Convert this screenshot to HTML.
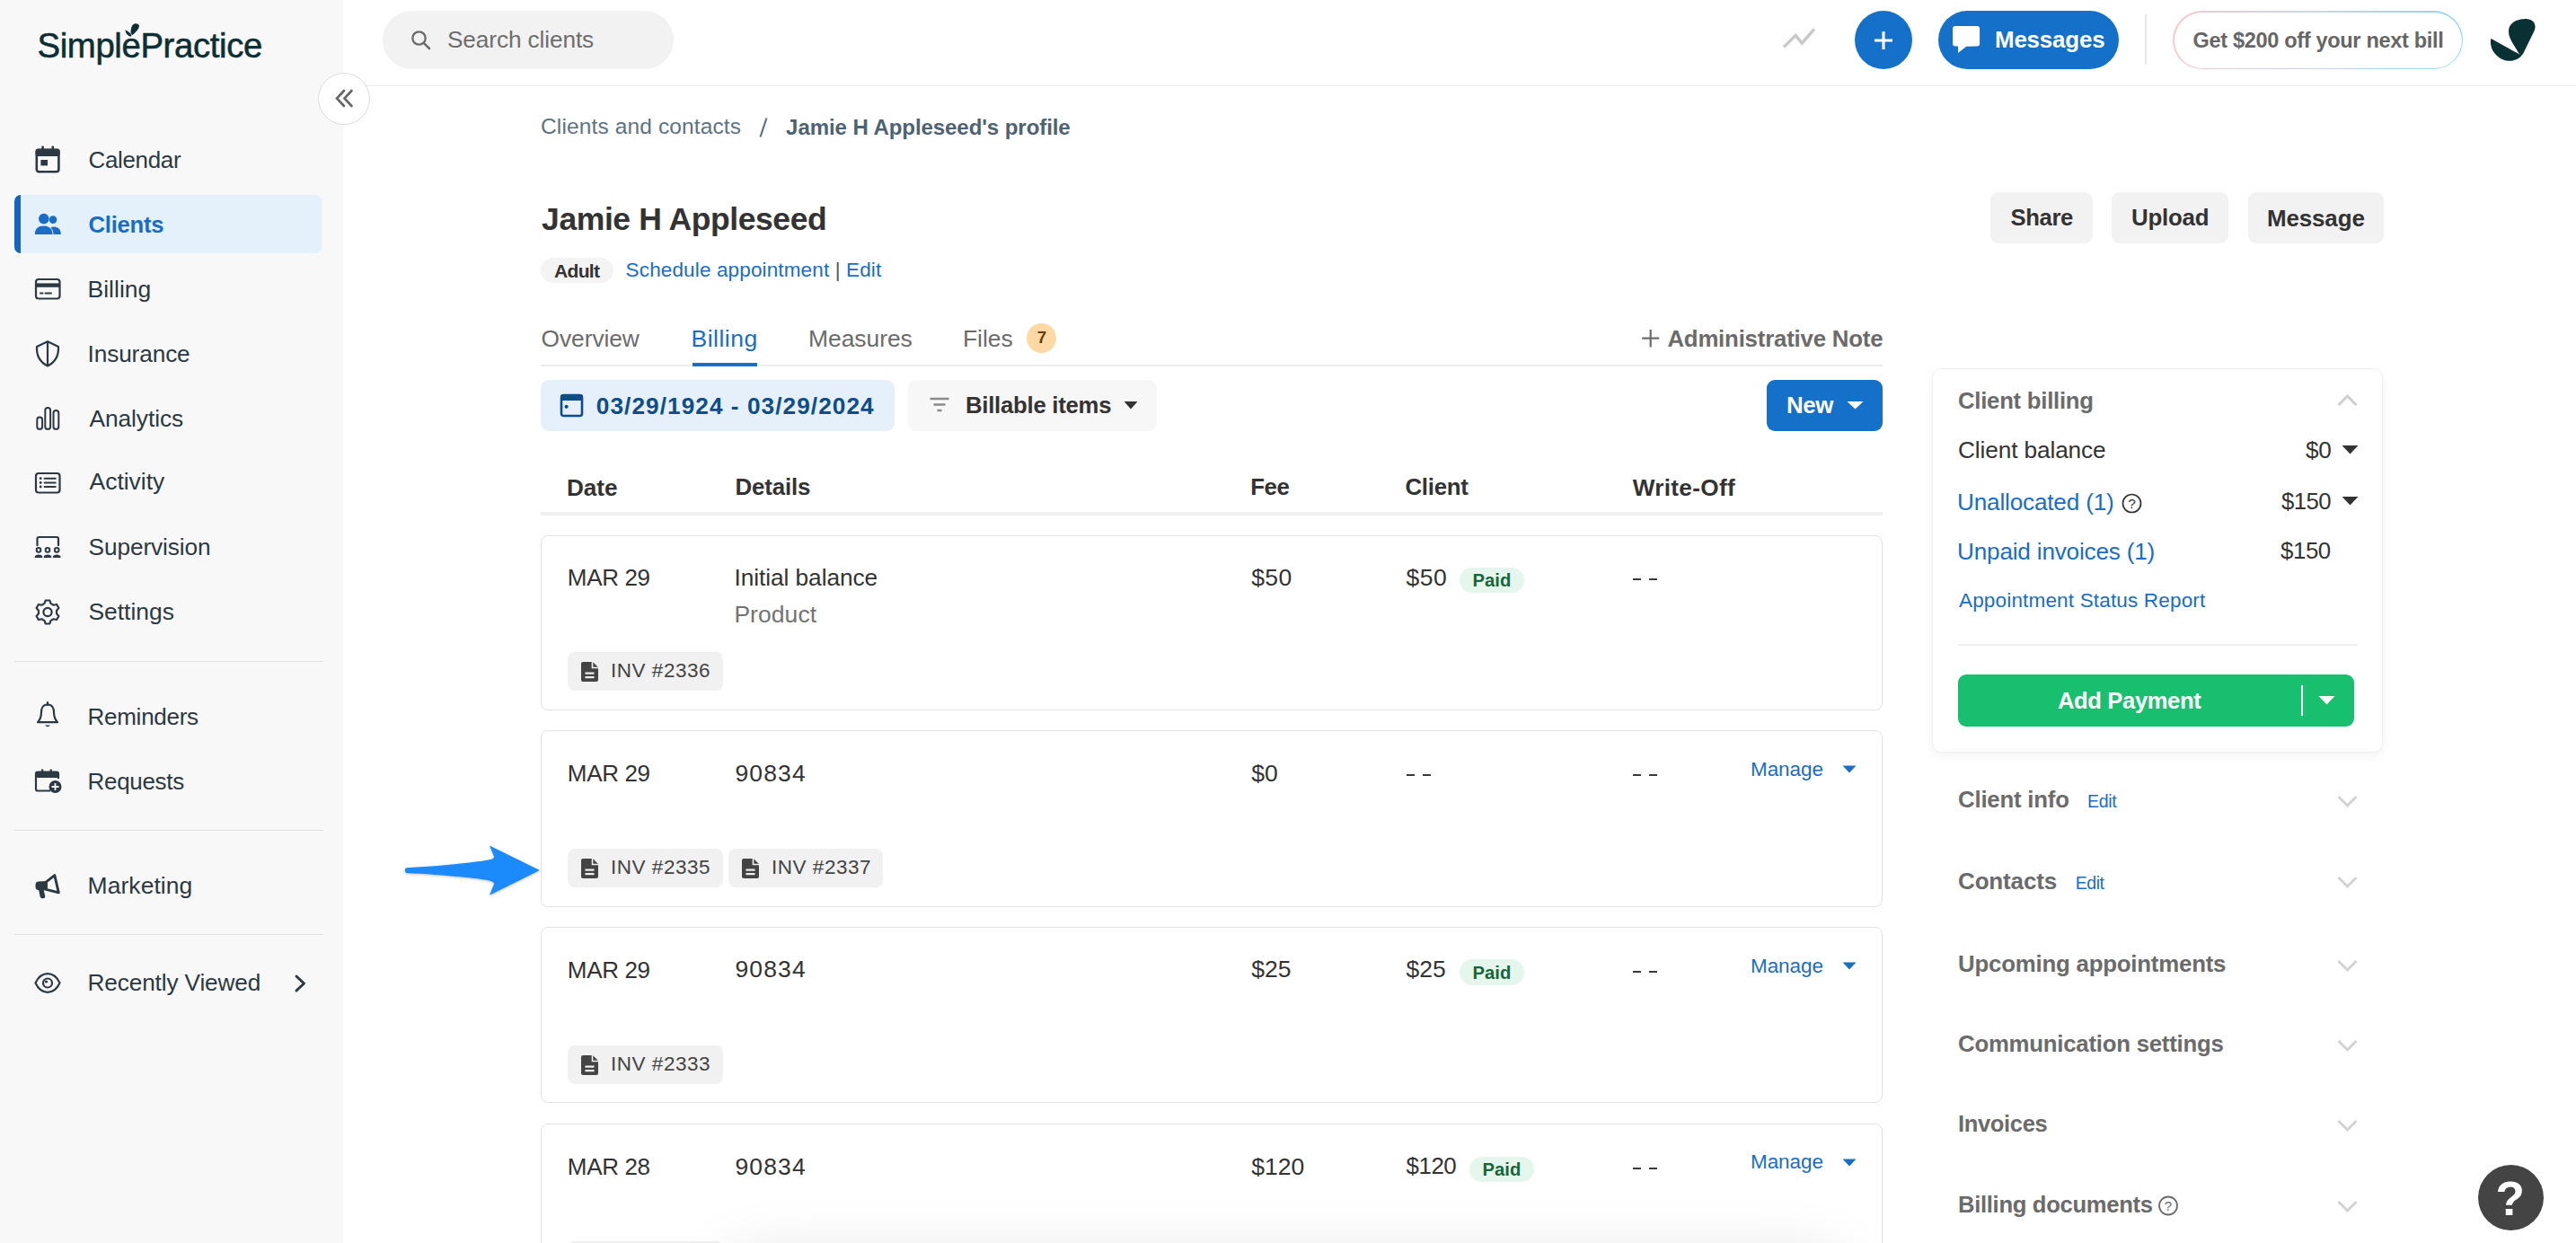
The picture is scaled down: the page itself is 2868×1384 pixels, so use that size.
<!DOCTYPE html>
<html><head><meta charset="utf-8"><title>SimplePractice</title>
<style>
html,body{margin:0;padding:0;}
body{width:2868px;height:1384px;position:relative;overflow:hidden;background:#fff;font-family:"Liberation Sans", sans-serif;}
.t{position:absolute;white-space:nowrap;}
svg{overflow:visible;}
</style></head><body>
<div style="position:absolute;left:0px;top:0px;width:383px;height:1384px;background:#f8f8f8;"></div>
<div class="t" style="left:41.52px;top:32.13px;font-size:38.36276253512907px;line-height:38.36276253512907px;color:#0d2f33;font-weight:400;letter-spacing:-0.391px;-webkit-text-stroke:0.55px #0d2f33;">SimplePractice</div>
<svg style="position:absolute;left:138px;top:25px;" width="18" height="17" viewBox="0 0 18 17"><path d="M8 15.5 C 7 11, 7.5 6, 9.5 3 C 11.5 0.5, 16 0.8, 16.8 3.5 C 17.5 6.5, 13 11, 8 15.5 Z" fill="#0d2f33" stroke="#f8f8f8" stroke-width="1.4" paint-order="stroke"/><path d="M1.4 8.3 C 4 9.5, 6.5 11, 8.5 13.8 L 8 15.6 C 4.5 15.5, 2 12.5, 1.4 8.3 Z" fill="#0d2f33" stroke="#f8f8f8" stroke-width="1.4" paint-order="stroke"/></svg>
<div style="position:absolute;left:16px;top:217px;width:342px;height:65px;background:#e5f1fa;border-radius:7px;overflow:hidden;"></div>
<div style="position:absolute;left:16px;top:217px;width:7px;height:65px;background:#1565c0;border-radius:8px 0 0 8px;"></div>
<div class="t" style="left:98.52px;top:165.83px;font-size:25.95181215039865px;line-height:25.95181215039865px;color:#2c3942;font-weight:400;letter-spacing:-0.315px;">Calendar</div>
<div class="t" style="left:98.52px;top:238.04px;font-size:25.7043104629539px;line-height:25.7043104629539px;color:#1a6dc6;font-weight:700;letter-spacing:-0.270px;">Clients</div>
<div class="t" style="left:97.50px;top:308.57px;font-size:26.5px;line-height:26.5px;color:#2c3942;font-weight:400;letter-spacing:0.023px;">Billing</div>
<div class="t" style="left:97.52px;top:380.78px;font-size:26.25055213366361px;line-height:26.25055213366361px;color:#2c3942;font-weight:400;letter-spacing:-0.134px;">Insurance</div>
<div class="t" style="left:99.50px;top:453.20px;font-size:26.338576103537644px;line-height:26.338576103537644px;color:#2c3942;font-weight:400;letter-spacing:-0.081px;">Analytics</div>
<div class="t" style="left:99.50px;top:523.38px;font-size:26.488218147219097px;line-height:26.488218147219097px;color:#2c3942;font-weight:400;letter-spacing:-0.005px;">Activity</div>
<div class="t" style="left:98.51px;top:596.25px;font-size:26.28418006763875px;line-height:26.28418006763875px;color:#2c3942;font-weight:400;letter-spacing:-0.111px;">Supervision</div>
<div class="t" style="left:98.50px;top:667.60px;font-size:26.45766353208639px;line-height:26.45766353208639px;color:#2c3942;font-weight:400;letter-spacing:-0.022px;">Settings</div>
<div class="t" style="left:97.53px;top:784.76px;font-size:26.03932485114141px;line-height:26.03932485114141px;color:#2c3942;font-weight:400;letter-spacing:-0.274px;">Reminders</div>
<div class="t" style="left:97.54px;top:857.00px;font-size:25.992457827035206px;line-height:25.992457827035206px;color:#2c3942;font-weight:400;letter-spacing:-0.300px;">Requests</div>
<div class="t" style="left:97.50px;top:972.97px;font-size:26.5px;line-height:26.5px;color:#2c3942;font-weight:400;letter-spacing:0.061px;">Marketing</div>
<div class="t" style="left:97.52px;top:1081.40px;font-size:26.229650591108104px;line-height:26.229650591108104px;color:#2c3942;font-weight:400;letter-spacing:-0.141px;">Recently Viewed</div>
<div style="position:absolute;left:16px;top:736px;width:344px;height:1px;background:#dedede;"></div>
<div style="position:absolute;left:16px;top:924px;width:344px;height:1px;background:#dedede;"></div>
<div style="position:absolute;left:16px;top:1040px;width:344px;height:1px;background:#dedede;"></div>
<svg style="position:absolute;left:326px;top:1084px;" width="18" height="22" viewBox="0 0 18 22"><path d="M4 3 L12.5 11 L4 19" fill="none" stroke="#2c3942" stroke-width="3" stroke-linecap="round" stroke-linejoin="round"/></svg>
<svg style="position:absolute;left:38px;top:161px;" width="30" height="32" viewBox="0 0 30 32"><rect x="2.8" y="6" width="24.6" height="24.3" rx="2.8" fill="none" stroke="#2c3942" stroke-width="2.6"/><rect x="1.5" y="4.5" width="27.2" height="8.5" rx="3" fill="#2c3942"/><rect x="8.3" y="1.5" width="2.6" height="5" rx="1" fill="#2c3942"/><rect x="19.5" y="1.5" width="2.6" height="5" rx="1" fill="#2c3942"/><rect x="7.4" y="17" width="7.6" height="6.4" fill="#2c3942"/></svg>
<svg style="position:absolute;left:37px;top:235px;" width="32" height="28" viewBox="0 0 32 28"><circle cx="11.8" cy="8.6" r="5.8" fill="#1a6dc6"/><circle cx="22" cy="9.6" r="4.3" fill="#1a6dc6"/><path d="M1.8 26 C 1.8 19, 6 16.5, 11.5 16.5 C 17 16.5, 21.5 19, 21.5 26 Z" fill="#1a6dc6"/><path d="M22.5 26 L30.8 26 C 30.8 20.5, 28 17.5, 23 17.5 C 21 17.5, 20 18, 19.5 18.5 C 21.5 20.5, 22.5 23, 22.5 26 Z" fill="#1a6dc6"/></svg>
<svg style="position:absolute;left:37px;top:308px;" width="32" height="27" viewBox="0 0 32 27"><rect x="3" y="3" width="26.5" height="21.5" rx="3" fill="none" stroke="#2c3942" stroke-width="2.2"/><rect x="3" y="7.4" width="26.5" height="4.4" fill="#2c3942"/><line x1="8" y1="18.5" x2="10.5" y2="18.5" stroke="#2c3942" stroke-width="2" stroke-linecap="round"/><line x1="13.5" y1="18.5" x2="20" y2="18.5" stroke="#2c3942" stroke-width="2" stroke-linecap="round"/></svg>
<svg style="position:absolute;left:37px;top:377px;" width="32" height="33" viewBox="0 0 32 33"><path d="M16 3.2 L4 9 C 3.5 19, 8 26.5, 16 30.5 C 24 26.5, 28.5 19, 28 9 Z" fill="none" stroke="#2c3942" stroke-width="2.2" stroke-linejoin="round"/><line x1="16" y1="3.5" x2="16" y2="30" stroke="#2c3942" stroke-width="2.2"/></svg>
<svg style="position:absolute;left:37px;top:450px;" width="32" height="30" viewBox="0 0 32 30"><rect x="4.3" y="14.6" width="5.8" height="13.2" rx="2.9" fill="none" stroke="#2c3942" stroke-width="2"/><rect x="13.3" y="4" width="5.8" height="23.8" rx="2.9" fill="none" stroke="#2c3942" stroke-width="2"/><rect x="22.5" y="7" width="5.8" height="20.8" rx="2.9" fill="none" stroke="#2c3942" stroke-width="2"/></svg>
<svg style="position:absolute;left:37px;top:524px;" width="32" height="27" viewBox="0 0 32 27"><rect x="3" y="3" width="26.5" height="21.5" rx="3" fill="none" stroke="#2c3942" stroke-width="2.2"/><circle cx="8.2" cy="8.7" r="1.4" fill="#2c3942"/><circle cx="8.2" cy="13.5" r="1.4" fill="#2c3942"/><circle cx="8.2" cy="18" r="1.4" fill="#2c3942"/><line x1="12.5" y1="8.7" x2="24.8" y2="8.7" stroke="#2c3942" stroke-width="1.9" stroke-linecap="round"/><line x1="12.5" y1="13.5" x2="24.8" y2="13.5" stroke="#2c3942" stroke-width="1.9" stroke-linecap="round"/><line x1="12.5" y1="18" x2="24.8" y2="18" stroke="#2c3942" stroke-width="1.9" stroke-linecap="round"/></svg>
<svg style="position:absolute;left:37px;top:595px;" width="32" height="28" viewBox="0 0 32 28"><path d="M4.5 12.2 L4.5 5 Q4.5 3 6.5 3 L26 3 Q28 3 28 5 L28 12.2" fill="none" stroke="#2c3942" stroke-width="2.2" stroke-linecap="round"/><circle cx="6" cy="17.4" r="2.3" fill="none" stroke="#2c3942" stroke-width="2"/><path d="M1.7000000000000002 26 L1.7000000000000002 25.2 C 1.7000000000000002 21.6, 10.3 21.6, 10.3 25.2 L10.3 26 Z" fill="#2c3942"/><circle cx="16" cy="17.4" r="2.3" fill="none" stroke="#2c3942" stroke-width="2"/><path d="M11.7 26 L11.7 25.2 C 11.7 21.6, 20.3 21.6, 20.3 25.2 L20.3 26 Z" fill="#2c3942"/><circle cx="26.2" cy="17.4" r="2.3" fill="none" stroke="#2c3942" stroke-width="2"/><path d="M21.9 26 L21.9 25.2 C 21.9 21.6, 30.5 21.6, 30.5 25.2 L30.5 26 Z" fill="#2c3942"/></svg>
<svg style="position:absolute;left:37px;top:665px;" width="32" height="33" viewBox="0 0 32 33"><path d="M13.66 3.51 L18.34 3.51 L19.46 6.90 L22.58 8.71 L26.08 7.98 L28.42 12.03 L26.04 14.69 L26.04 18.31 L28.42 20.97 L26.08 25.02 L22.58 24.29 L19.46 26.10 L18.34 29.49 L13.66 29.49 L12.54 26.10 L9.42 24.29 L5.92 25.02 L3.58 20.97 L5.96 18.31 L5.96 14.69 L3.58 12.03 L5.92 7.98 L9.42 8.71 L12.54 6.90 Z" fill="none" stroke="#2c3942" stroke-width="2.2" stroke-linejoin="round"/><circle cx="16" cy="16.5" r="4.6" fill="none" stroke="#2c3942" stroke-width="2.2"/></svg>
<svg style="position:absolute;left:37px;top:780px;" width="32" height="34" viewBox="0 0 32 34"><path d="M16 4.5 C 10.5 4.5, 9 9, 9 13 C 9 19, 7.5 21.5, 5 24.2 L27 24.2 C 24.5 21.5, 23 19, 23 13 C 23 9, 21.5 4.5, 16 4.5 Z" fill="none" stroke="#2c3942" stroke-width="2.2" stroke-linejoin="round"/><path d="M16 2 L16 5" stroke="#2c3942" stroke-width="2.2" stroke-linecap="round"/><path d="M13 27.5 Q16 31, 19 27.5 Z" fill="#2c3942"/></svg>
<svg style="position:absolute;left:37px;top:854px;" width="32" height="30" viewBox="0 0 32 30"><path d="M19 26.5 L5 26.5 Q3 26.5 3 24.5 L3 7.5 Q3 5.5 5 5.5 L26 5.5 Q28 5.5 28 7.5 L28 13" fill="none" stroke="#2c3942" stroke-width="2.2"/><rect x="3" y="5.5" width="25" height="6.5" rx="2" fill="#2c3942"/><rect x="9" y="2.5" width="2.2" height="4" fill="#2c3942"/><rect x="18.6" y="2.5" width="2.2" height="4" fill="#2c3942"/><circle cx="24.5" cy="22" r="7" fill="#2c3942"/><path d="M24.5 18 L24.5 26 M20.5 22 L28.5 22" stroke="#f8f8f8" stroke-width="1.8"/></svg>
<svg style="position:absolute;left:37px;top:970px;" width="32" height="32" viewBox="0 0 32 32"><path d="M2.5 15.5 Q2.5 11.8 6 11.6 L14.5 11 L14.5 21.2 L11.8 21.3 L13.2 27.8 Q13.6 30.2 11 30.2 L9.8 30.2 Q8.1 30.2 7.7 28.4 L6.2 21.2 Q2.5 20.8 2.5 17.5 Z" fill="#2c3942"/><path d="M14.5 11.8 L23.8 4.6 L28.3 23.8 L14.5 20.4 Z" fill="none" stroke="#2c3942" stroke-width="2.9" stroke-linejoin="round"/></svg>
<svg style="position:absolute;left:37px;top:1081px;" width="32" height="27" viewBox="0 0 32 27"><path d="M2.5 13.5 C 6 6, 11 3.2, 16 3.2 C 21 3.2, 26 6, 29.5 13.5 C 26 21, 21 23.8, 16 23.8 C 11 23.8, 6 21, 2.5 13.5 Z" fill="none" stroke="#2c3942" stroke-width="2.2"/><circle cx="16" cy="13.5" r="5" fill="none" stroke="#2c3942" stroke-width="2.2"/><circle cx="14.5" cy="12" r="1.6" fill="#2c3942"/></svg>
<div style="position:absolute;left:383px;top:95px;width:2485px;height:1px;background:#ececec;"></div>
<div style="position:absolute;left:354px;top:81px;width:58px;height:58px;background:#fff;border:1px solid #dcdcdc;border-radius:50%;box-sizing:border-box;"></div>
<svg style="position:absolute;left:370px;top:98px;" width="26" height="24" viewBox="0 0 26 24"><path d="M13 3 L5 11.5 L13 20 M21.5 3 L13.5 11.5 L21.5 20" fill="none" stroke="#666" stroke-width="2.6" stroke-linecap="round" stroke-linejoin="miter"/></svg>
<div style="position:absolute;left:426px;top:12px;width:324px;height:65px;background:#f2f2f2;border-radius:33px;"></div>
<svg style="position:absolute;left:455px;top:31px;" width="28" height="28" viewBox="0 0 28 28"><circle cx="11.5" cy="11.5" r="7.2" fill="none" stroke="#6b6b6b" stroke-width="2.3"/><line x1="16.8" y1="16.8" x2="23" y2="23" stroke="#6b6b6b" stroke-width="2.5" stroke-linecap="round"/></svg>
<div class="t" style="left:497.91px;top:30.53px;font-size:26.252134436071113px;line-height:26.252134436071113px;color:#6e6e6e;font-weight:400;letter-spacing:-0.119px;">Search clients</div>
<svg style="position:absolute;left:1980px;top:20px;" width="50" height="40" viewBox="0 0 50 40"><path d="M6 32.4 L19.1 19.6 L26.3 28.2 L39.9 12.4" fill="none" stroke="#c9c9c9" stroke-width="3.4"/></svg>
<div style="position:absolute;left:2065px;top:12px;width:64px;height:65px;background:#1570c9;border-radius:50%;"></div>
<svg style="position:absolute;left:2079px;top:27px;" width="36" height="36" viewBox="0 0 36 36"><path d="M18 8 L18 28 M8 18 L28 18" stroke="#fff" stroke-width="3.1"/></svg>
<div style="position:absolute;left:2158px;top:12px;width:201px;height:65px;background:#1570c9;border-radius:33px;"></div>
<svg style="position:absolute;left:2172px;top:26px;" width="36" height="36" viewBox="0 0 36 36"><path d="M5 3.1 Q2 3.1 2 6.1 L2 22.5 Q2 25.5 5 25.5 L8 25.5 L8 33 L17.2 25.8 L29.1 25.5 Q32.1 25.5 32.1 22.5 L32.1 6.1 Q32.1 3.1 29.1 3.1 Z" fill="#fff"/></svg>
<div class="t" style="left:2221.01px;top:31.66px;font-size:25.921118629374412px;line-height:25.921118629374412px;color:#fff;font-weight:700;letter-spacing:-0.188px;">Messages</div>
<div style="position:absolute;left:2388px;top:16px;width:2px;height:56px;background:#e6e6e6;"></div>
<div style="position:absolute;left:2419px;top:12px;width:323px;height:65px;border-radius:33px;background:linear-gradient(90deg,#f7c9cf,#c9d6ea,#8fd3f0);"><div style="position:absolute;left:1.5px;top:1.5px;right:1.5px;bottom:1.5px;border-radius:32px;background:#fff;"></div></div>
<div class="t" style="left:2441.50px;top:33.69px;font-size:23.521909536387376px;line-height:23.521909536387376px;color:#666;font-weight:700;letter-spacing:-0.317px;">Get $200 off your next bill</div>
<svg style="position:absolute;left:2760px;top:10px;" width="80" height="70" viewBox="0 0 80 70"><path d="M45 50.5 C 39 40, 33 33, 33 25 C 33 15, 43 11, 52 11 C 59 11, 63 15, 62.5 20.5 C 62.3 23, 61.5 24.5, 60.5 26.5 L 49.5 49 C 48.5 50.5, 47 51, 45 50.5 Z" fill="#093133"/><path d="M13.5 33 L 45.5 50.8 L 49.5 49 C 46 55, 40 57.8, 34 57.8 C 24 57.8, 13.5 49, 13 38 C 13 35, 13 33.5, 13.5 33 Z" fill="#093133"/></svg>
<div class="t" style="left:602.00px;top:128.96px;font-size:24.5px;line-height:24.5px;color:#5e7282;font-weight:400;letter-spacing:0.128px;">Clients and contacts</div>
<svg style="position:absolute;left:844px;top:130px;" width="12" height="24" viewBox="0 0 12 24"><path d="M9.5 1.5 L2.5 22.5" stroke="#5e7282" stroke-width="2.2"/></svg>
<div class="t" style="left:875.10px;top:129.65px;font-size:24.045925444872843px;line-height:24.045925444872843px;color:#4f6272;font-weight:700;letter-spacing:-0.079px;">Jamie H Appleseed's profile</div>
<div class="t" style="left:603.10px;top:226.51px;font-size:35.54335392166344px;line-height:35.54335392166344px;color:#333333;font-weight:700;letter-spacing:-0.431px;">Jamie H Appleseed</div>
<div style="position:absolute;left:602px;top:287px;width:81px;height:28px;background:#f4f4f4;border-radius:14px;"></div>
<div class="t" style="left:617.00px;top:290.96px;font-size:21.077568480564015px;line-height:21.077568480564015px;color:#333333;font-weight:700;letter-spacing:-0.724px;">Adult</div>
<div class="t" style="left:696.60px;top:289.55px;font-size:22.5px;line-height:22.5px;color:#1a6dc6;font-weight:400;letter-spacing:0.139px;">Schedule appointment <span style="color:#555">|</span> Edit</div>
<div style="position:absolute;left:2216px;top:214px;width:114px;height:57px;background:#f2f2f2;border-radius:9px;"></div>
<div class="t" style="left:2238.50px;top:229.89px;font-size:25.652445387813575px;line-height:25.652445387813575px;color:#333333;font-weight:700;letter-spacing:-0.377px;">Share</div>
<div style="position:absolute;left:2351px;top:214px;width:130px;height:57px;background:#f2f2f2;border-radius:9px;"></div>
<div class="t" style="left:2373.01px;top:229.70px;font-size:25.876144914779278px;line-height:25.876144914779278px;color:#333333;font-weight:700;letter-spacing:-0.214px;">Upload</div>
<div style="position:absolute;left:2503px;top:214px;width:151px;height:57px;background:#f2f2f2;border-radius:9px;"></div>
<div class="t" style="left:2524.01px;top:229.60px;font-size:25.987681334642463px;line-height:25.987681334642463px;color:#333333;font-weight:700;letter-spacing:-0.147px;">Message</div>
<div class="t" style="left:602.60px;top:364.28px;font-size:26.36776746821545px;line-height:26.36776746821545px;color:#6b6b6b;font-weight:400;letter-spacing:-0.079px;">Overview</div>
<div class="t" style="left:769.50px;top:364.17px;font-size:26.5px;line-height:26.5px;color:#1a6dc6;font-weight:400;letter-spacing:0.506px;">Billing</div>
<div class="t" style="left:900.00px;top:364.22px;font-size:26.441756247860326px;line-height:26.441756247860326px;color:#6b6b6b;font-weight:400;letter-spacing:-0.036px;">Measures</div>
<div class="t" style="left:1072.01px;top:364.23px;font-size:26.425929731400846px;line-height:26.425929731400846px;color:#6b6b6b;font-weight:400;letter-spacing:-0.038px;">Files</div>
<div style="position:absolute;left:1143px;top:360px;width:33px;height:33px;background:#fed9a4;border-radius:50%;"></div>
<div class="t" style="left:1154.70px;top:367.06px;font-size:18.6px;line-height:18.6px;color:#6a3c00;font-weight:700;">7</div>
<div style="position:absolute;left:602px;top:406px;width:1494px;height:2px;background:#ececec;"></div>
<div style="position:absolute;left:771px;top:404px;width:72px;height:4px;background:#1570c9;"></div>
<svg style="position:absolute;left:1826px;top:365px;" width="24" height="24" viewBox="0 0 24 24"><path d="M11.7 2 L11.7 21.5 M2.2 11.7 L21.2 11.7" stroke="#6b6b6b" stroke-width="2.2"/></svg>
<div class="t" style="left:1856.40px;top:364.95px;font-size:25.81728945154148px;line-height:25.81728945154148px;color:#6b6b6b;font-weight:700;letter-spacing:-0.200px;">Administrative Note</div>
<div style="position:absolute;left:602px;top:423px;width:394px;height:57px;background:#e6f0fa;border-radius:9px;"></div>
<svg style="position:absolute;left:622px;top:437px;" width="29" height="29" viewBox="0 0 29 29"><rect x="3" y="3" width="23" height="23" rx="2.5" fill="none" stroke="#0f4c8a" stroke-width="2.6"/><rect x="2" y="2" width="25" height="7" rx="2.5" fill="#0f4c8a"/><circle cx="8.6" cy="15.8" r="2.1" fill="#0f4c8a"/></svg>
<div class="t" style="left:663.85px;top:438.92px;font-size:26.2px;line-height:26.2px;color:#0f4c8a;font-weight:700;letter-spacing:1.060px;">03/29/1924 - 03/29/2024</div>
<div style="position:absolute;left:1011px;top:423px;width:277px;height:57px;background:#f7f7f7;border-radius:9px;"></div>
<svg style="position:absolute;left:1033px;top:438px;" width="26" height="26" viewBox="0 0 26 26"><path d="M2.5 6 L23.5 6 M6.5 12.5 L19.5 12.5 M10.5 19 L15.5 19" stroke="#8a8a8a" stroke-width="2.4"/></svg>
<div class="t" style="left:1075.02px;top:439.34px;font-size:25.709653481243617px;line-height:25.709653481243617px;color:#333333;font-weight:700;letter-spacing:-0.241px;">Billable items</div>
<svg style="position:absolute;left:1250px;top:445px;" width="18" height="12" viewBox="0 0 18 12"><path d="M1.5 2 L16.5 2 L9 10.5 Z" fill="#333"/></svg>
<div style="position:absolute;left:1967px;top:423px;width:129px;height:57px;background:#1570c9;border-radius:9px;"></div>
<div class="t" style="left:1989.01px;top:439.23px;font-size:25.83842157345024px;line-height:25.83842157345024px;color:#fff;font-weight:700;letter-spacing:-0.369px;">New</div>
<svg style="position:absolute;left:2055px;top:445px;" width="22" height="12" viewBox="0 0 22 12"><path d="M1.5 2 L19.5 2 L10.5 10.5 Z" fill="#fff"/></svg>
<div class="t" style="left:631.00px;top:529.66px;font-size:26.153327170473116px;line-height:26.153327170473116px;color:#333333;font-weight:700;letter-spacing:-0.033px;">Date</div>
<div class="t" style="left:818.41px;top:529.86px;font-size:25.918407186760135px;line-height:25.918407186760135px;color:#333333;font-weight:700;letter-spacing:-0.151px;">Details</div>
<div class="t" style="left:1392.22px;top:529.99px;font-size:25.760750766781953px;line-height:25.760750766781953px;color:#333333;font-weight:700;letter-spacing:-0.365px;">Fee</div>
<div class="t" style="left:1564.42px;top:529.96px;font-size:25.795519612283826px;line-height:25.795519612283826px;color:#333333;font-weight:700;letter-spacing:-0.222px;">Client</div>
<div class="t" style="left:1817.70px;top:529.62px;font-size:26.2px;line-height:26.2px;color:#333333;font-weight:700;letter-spacing:0.312px;">Write-Off</div>
<div style="position:absolute;left:602px;top:569.5px;width:1494px;height:4.5px;background:#f0f0f0;"></div>
<div style="position:absolute;left:602.4px;top:596.3px;width:1493.6px;height:195.20000000000005px;background:#fff;border:1px solid #e2e2e2;border-radius:8px;box-sizing:border-box;"></div>
<div style="position:absolute;left:602.4px;top:813px;width:1493.6px;height:196.5px;background:#fff;border:1px solid #e2e2e2;border-radius:8px;box-sizing:border-box;"></div>
<div style="position:absolute;left:602.4px;top:1032px;width:1493.6px;height:196px;background:#fff;border:1px solid #e2e2e2;border-radius:8px;box-sizing:border-box;"></div>
<div style="position:absolute;left:602.4px;top:1250.6px;width:1493.6px;height:200.0px;background:#fff;border:1px solid #e2e2e2;border-radius:8px;box-sizing:border-box;"></div>
<div class="t" style="left:631.84px;top:630.19px;font-size:26.00298454364772px;line-height:26.00298454364772px;color:#333333;font-weight:400;letter-spacing:-0.349px;">MAR 29</div>
<div class="t" style="left:817.41px;top:629.92px;font-size:26.32404318703194px;line-height:26.32404318703194px;color:#333333;font-weight:400;letter-spacing:-0.076px;">Initial balance</div>
<div class="t" style="left:1393.20px;top:629.77px;font-size:26.5px;line-height:26.5px;color:#333333;font-weight:400;letter-spacing:0.412px;">$50</div>
<div class="t" style="left:1565.50px;top:629.77px;font-size:26.5px;line-height:26.5px;color:#333333;font-weight:400;letter-spacing:0.512px;">$50</div>
<div style="position:absolute;left:1817.5px;top:643.9999999999999px;width:9.700000000000045px;height:2.400000000000091px;background:#3a3a3a;"></div>
<div style="position:absolute;left:1835.8px;top:643.9999999999999px;width:9.700000000000045px;height:2.400000000000091px;background:#3a3a3a;"></div>
<div class="t" style="left:817.40px;top:671.27px;font-size:26.5px;line-height:26.5px;color:#737373;font-weight:400;letter-spacing:0.056px;">Product</div>
<div style="position:absolute;left:1625px;top:631.6999999999999px;width:71.5px;height:28.5px;background:#e5f7ed;border-radius:15px;"></div>
<div class="t" style="left:1639.50px;top:636.20px;font-size:20.2px;line-height:20.2px;color:#17653a;font-weight:700;letter-spacing:0.066px;">Paid</div>
<div style="position:absolute;left:632px;top:726.1999999999999px;width:173px;height:42.5px;background:#f1f1f1;border-radius:8px;"></div>
<svg style="position:absolute;left:646px;top:734.6999999999999px;" width="22" height="26" viewBox="0 0 22 26"><path d="M3 2 Q1 2 1 4 L1 22 Q1 24 3 24 L18 24 Q20 24 20 22 L20 8 L14 2 Z" fill="#444"/><path d="M13.5 1.5 L13.5 8.5 L20.5 8.5" fill="none" stroke="#f1f1f1" stroke-width="1.6"/><rect x="5.5" y="13.5" width="10" height="2.2" fill="#f1f1f1"/><rect x="5.5" y="18" width="10" height="2.2" fill="#f1f1f1"/></svg>
<div class="t" style="left:680.00px;top:735.95px;font-size:22.5px;line-height:22.5px;color:#444;font-weight:400;letter-spacing:0.523px;">INV #2336</div>
<div class="t" style="left:631.84px;top:847.99px;font-size:26.00298454364772px;line-height:26.00298454364772px;color:#333333;font-weight:400;letter-spacing:-0.349px;">MAR 29</div>
<div class="t" style="left:818.40px;top:847.57px;font-size:26.5px;line-height:26.5px;color:#333333;font-weight:400;letter-spacing:1.162px;">90834</div>
<div class="t" style="left:1393.20px;top:847.57px;font-size:26.5px;line-height:26.5px;color:#333333;font-weight:400;">$0</div>
<div class="t" style="left:1565.50px;top:847.57px;font-size:26.5px;line-height:26.5px;color:#333333;font-weight:400;"></div>
<div style="position:absolute;left:1817.5px;top:861.8px;width:9.700000000000045px;height:2.400000000000091px;background:#3a3a3a;"></div>
<div style="position:absolute;left:1835.8px;top:861.8px;width:9.700000000000045px;height:2.400000000000091px;background:#3a3a3a;"></div>
<div style="position:absolute;left:1565.5px;top:861.8px;width:9.700000000000045px;height:2.400000000000091px;background:#3a3a3a;"></div>
<div style="position:absolute;left:1583.8px;top:861.8px;width:9.700000000000045px;height:2.400000000000091px;background:#3a3a3a;"></div>
<div class="t" style="left:1949.00px;top:845.59px;font-size:22.458214266045783px;line-height:22.458214266045783px;color:#1a6dc6;font-weight:400;letter-spacing:-0.030px;">Manage</div>
<svg style="position:absolute;left:2050px;top:851px;" width="18" height="11" viewBox="0 0 18 11"><path d="M1.5 1.5 L16.5 1.5 L9 9.5 Z" fill="#1a6dc6"/></svg>
<div style="position:absolute;left:632px;top:945.2px;width:173px;height:42.5px;background:#f1f1f1;border-radius:8px;"></div>
<svg style="position:absolute;left:646px;top:953.7px;" width="22" height="26" viewBox="0 0 22 26"><path d="M3 2 Q1 2 1 4 L1 22 Q1 24 3 24 L18 24 Q20 24 20 22 L20 8 L14 2 Z" fill="#444"/><path d="M13.5 1.5 L13.5 8.5 L20.5 8.5" fill="none" stroke="#f1f1f1" stroke-width="1.6"/><rect x="5.5" y="13.5" width="10" height="2.2" fill="#f1f1f1"/><rect x="5.5" y="18" width="10" height="2.2" fill="#f1f1f1"/></svg>
<div class="t" style="left:680.00px;top:954.95px;font-size:22.5px;line-height:22.5px;color:#444;font-weight:400;letter-spacing:0.523px;">INV #2335</div>
<div style="position:absolute;left:811px;top:945.2px;width:172px;height:42.5px;background:#f1f1f1;border-radius:8px;"></div>
<svg style="position:absolute;left:825px;top:953.7px;" width="22" height="26" viewBox="0 0 22 26"><path d="M3 2 Q1 2 1 4 L1 22 Q1 24 3 24 L18 24 Q20 24 20 22 L20 8 L14 2 Z" fill="#444"/><path d="M13.5 1.5 L13.5 8.5 L20.5 8.5" fill="none" stroke="#f1f1f1" stroke-width="1.6"/><rect x="5.5" y="13.5" width="10" height="2.2" fill="#f1f1f1"/><rect x="5.5" y="18" width="10" height="2.2" fill="#f1f1f1"/></svg>
<div class="t" style="left:859.00px;top:954.95px;font-size:22.5px;line-height:22.5px;color:#444;font-weight:400;letter-spacing:0.523px;">INV #2337</div>
<div class="t" style="left:631.84px;top:1066.79px;font-size:26.00298454364772px;line-height:26.00298454364772px;color:#333333;font-weight:400;letter-spacing:-0.349px;">MAR 29</div>
<div class="t" style="left:818.40px;top:1066.37px;font-size:26.5px;line-height:26.5px;color:#333333;font-weight:400;letter-spacing:1.162px;">90834</div>
<div class="t" style="left:1393.20px;top:1066.37px;font-size:26.5px;line-height:26.5px;color:#333333;font-weight:400;">$25</div>
<div class="t" style="left:1565.50px;top:1066.37px;font-size:26.5px;line-height:26.5px;color:#333333;font-weight:400;">$25</div>
<div style="position:absolute;left:1817.5px;top:1080.6px;width:9.700000000000045px;height:2.400000000000091px;background:#3a3a3a;"></div>
<div style="position:absolute;left:1835.8px;top:1080.6px;width:9.700000000000045px;height:2.400000000000091px;background:#3a3a3a;"></div>
<div style="position:absolute;left:1625px;top:1068.3px;width:71.5px;height:28.5px;background:#e5f7ed;border-radius:15px;"></div>
<div class="t" style="left:1639.50px;top:1072.80px;font-size:20.2px;line-height:20.2px;color:#17653a;font-weight:700;letter-spacing:0.066px;">Paid</div>
<div class="t" style="left:1949.00px;top:1064.59px;font-size:22.458214266045783px;line-height:22.458214266045783px;color:#1a6dc6;font-weight:400;letter-spacing:-0.030px;">Manage</div>
<svg style="position:absolute;left:2050px;top:1070px;" width="18" height="11" viewBox="0 0 18 11"><path d="M1.5 1.5 L16.5 1.5 L9 9.5 Z" fill="#1a6dc6"/></svg>
<div style="position:absolute;left:632px;top:1164px;width:173px;height:42.5px;background:#f1f1f1;border-radius:8px;"></div>
<svg style="position:absolute;left:646px;top:1172.5px;" width="22" height="26" viewBox="0 0 22 26"><path d="M3 2 Q1 2 1 4 L1 22 Q1 24 3 24 L18 24 Q20 24 20 22 L20 8 L14 2 Z" fill="#444"/><path d="M13.5 1.5 L13.5 8.5 L20.5 8.5" fill="none" stroke="#f1f1f1" stroke-width="1.6"/><rect x="5.5" y="13.5" width="10" height="2.2" fill="#f1f1f1"/><rect x="5.5" y="18" width="10" height="2.2" fill="#f1f1f1"/></svg>
<div class="t" style="left:680.00px;top:1173.75px;font-size:22.5px;line-height:22.5px;color:#444;font-weight:400;letter-spacing:0.523px;">INV #2333</div>
<div class="t" style="left:631.84px;top:1285.99px;font-size:26.00298454364772px;line-height:26.00298454364772px;color:#333333;font-weight:400;letter-spacing:-0.349px;">MAR 28</div>
<div class="t" style="left:818.40px;top:1285.57px;font-size:26.5px;line-height:26.5px;color:#333333;font-weight:400;letter-spacing:1.162px;">90834</div>
<div class="t" style="left:1393.20px;top:1285.57px;font-size:26.5px;line-height:26.5px;color:#333333;font-weight:400;">$120</div>
<div class="t" style="left:1565.50px;top:1286.09px;font-size:25.882246429994336px;line-height:25.882246429994336px;color:#333333;font-weight:400;letter-spacing:-0.452px;">$120</div>
<div style="position:absolute;left:1817.5px;top:1299.8px;width:9.700000000000045px;height:2.400000000000091px;background:#3a3a3a;"></div>
<div style="position:absolute;left:1835.8px;top:1299.8px;width:9.700000000000045px;height:2.400000000000091px;background:#3a3a3a;"></div>
<div style="position:absolute;left:1636px;top:1287.5px;width:71.5px;height:28.5px;background:#e5f7ed;border-radius:15px;"></div>
<div class="t" style="left:1650.50px;top:1292.00px;font-size:20.2px;line-height:20.2px;color:#17653a;font-weight:700;letter-spacing:0.066px;">Paid</div>
<div class="t" style="left:1949.00px;top:1283.19px;font-size:22.458214266045783px;line-height:22.458214266045783px;color:#1a6dc6;font-weight:400;letter-spacing:-0.030px;">Manage</div>
<svg style="position:absolute;left:2050px;top:1288.6px;" width="18" height="11" viewBox="0 0 18 11"><path d="M1.5 1.5 L16.5 1.5 L9 9.5 Z" fill="#1a6dc6"/></svg>
<div style="position:absolute;left:632px;top:1381.6px;width:173px;height:42.5px;background:#f1f1f1;border-radius:8px;"></div>
<svg style="position:absolute;left:646px;top:1390.1px;" width="22" height="26" viewBox="0 0 22 26"><path d="M3 2 Q1 2 1 4 L1 22 Q1 24 3 24 L18 24 Q20 24 20 22 L20 8 L14 2 Z" fill="#444"/><path d="M13.5 1.5 L13.5 8.5 L20.5 8.5" fill="none" stroke="#f1f1f1" stroke-width="1.6"/><rect x="5.5" y="13.5" width="10" height="2.2" fill="#f1f1f1"/><rect x="5.5" y="18" width="10" height="2.2" fill="#f1f1f1"/></svg>
<div class="t" style="left:680.00px;top:1391.35px;font-size:22.5px;line-height:22.5px;color:#444;font-weight:400;letter-spacing:0.523px;">INV #2334</div>
<div style="position:absolute;left:603px;top:1290px;width:1492px;height:94px;overflow:hidden;pointer-events:none;"><div style="position:absolute;left:210px;top:120px;width:1235px;height:60px;border-radius:40px;box-shadow:0 0 70px 12px rgba(0,0,0,0.115);background:#fff;"></div></div>
<svg style="position:absolute;left:445px;top:935px;filter:drop-shadow(0 1.5px 1.5px rgba(0,0,0,0.25));" width="165" height="70" viewBox="0 0 165 70"><path d="M7.8 31.3 C 40 29.5, 80 26, 100 22.3 C 103 21.5, 105 20.5, 105.2 19 L 100 6.4 L 155.9 34.1 L 100 61.8 L 105.2 49 C 105 47.5, 103 46.3, 100 45.5 C 80 42, 40 38.5, 7.8 37 C 5.5 36.8, 5 31.5, 7.8 31.3 Z" fill="#1b8bfb"/></svg>
<div style="position:absolute;left:2151px;top:410px;width:502px;height:428px;background:#fff;border:1px solid #f0f0f0;border-radius:10px;box-sizing:border-box;box-shadow:0 4px 12px rgba(0,0,0,0.05);"></div>
<div class="t" style="left:2180.02px;top:433.86px;font-size:25.683498503591302px;line-height:25.683498503591302px;color:#6b6b6b;font-weight:700;letter-spacing:-0.235px;">Client billing</div>
<svg style="position:absolute;left:2600px;top:437px;" width="27" height="18" viewBox="0 0 27 18"><path d="M3.5 14 L13.5 4 L23.5 14" fill="none" stroke="#cfcfcf" stroke-width="3"/></svg>
<div class="t" style="left:2180.01px;top:487.58px;font-size:26.24464134624424px;line-height:26.24464134624424px;color:#333333;font-weight:400;letter-spacing:-0.123px;">Client balance</div>
<div class="t" style="left:2567.00px;top:487.66px;font-size:26.15971956741511px;line-height:26.15971956741511px;color:#333333;font-weight:400;letter-spacing:-0.369px;">$0</div>
<svg style="position:absolute;left:2606px;top:494px;" width="21" height="14" viewBox="0 0 21 14"><path d="M1.5 2 L19.5 2 L10.5 11.5 Z" fill="#333"/></svg>
<div class="t" style="left:2179.03px;top:546.18px;font-size:26.134556669896508px;line-height:26.134556669896508px;color:#1a6dc6;font-weight:400;letter-spacing:-0.174px;">Unallocated (1)</div>
<svg style="position:absolute;left:2361px;top:548px;" width="25" height="25" viewBox="0 0 25 25"><circle cx="12.5" cy="12.5" r="10" fill="none" stroke="#333" stroke-width="1.7"/><text x="12.6" y="18" text-anchor="middle" font-family="Liberation Sans" font-size="15.5" font-weight="400" fill="#333">?</text></svg>
<div class="t" style="left:2540.00px;top:546.49px;font-size:25.768442408102498px;line-height:25.768442408102498px;color:#333333;font-weight:400;letter-spacing:-0.536px;">$150</div>
<svg style="position:absolute;left:2606px;top:551px;" width="21" height="14" viewBox="0 0 21 14"><path d="M1.5 2 L19.5 2 L10.5 11.5 Z" fill="#333"/></svg>
<div class="t" style="left:2179.03px;top:600.99px;font-size:26.121204115441618px;line-height:26.121204115441618px;color:#1a6dc6;font-weight:400;letter-spacing:-0.178px;">Unpaid invoices (1)</div>
<div class="t" style="left:2539.00px;top:601.19px;font-size:25.882246429994336px;line-height:25.882246429994336px;color:#333333;font-weight:400;letter-spacing:-0.452px;">$150</div>
<div class="t" style="left:2181.00px;top:657.75px;font-size:22.5px;line-height:22.5px;color:#1a6dc6;font-weight:400;letter-spacing:0.171px;">Appointment Status Report</div>
<div style="position:absolute;left:2180px;top:717px;width:445px;height:2px;background:#efefef;"></div>
<div style="position:absolute;left:2180px;top:751px;width:441px;height:58px;background:#17bf6e;border-radius:9px;"></div>
<div class="t" style="left:2291.00px;top:768.13px;font-size:25.604395089617736px;line-height:25.604395089617736px;color:#fff;font-weight:700;letter-spacing:-0.381px;">Add Payment</div>
<div style="position:absolute;left:2562px;top:763px;width:2px;height:34px;background:#fff;"></div>
<svg style="position:absolute;left:2580px;top:773px;" width="22" height="14" viewBox="0 0 22 14"><path d="M1.5 2 L19.5 2 L10.5 11.5 Z" fill="#fff"/></svg>
<div class="t" style="left:2180.02px;top:877.77px;font-size:25.78282453322587px;line-height:25.78282453322587px;color:#6b6b6b;font-weight:700;letter-spacing:-0.201px;">Client info</div>
<div class="t" style="left:2324.03px;top:883.05px;font-size:19.556584041717265px;line-height:19.556584041717265px;color:#1a6dc6;font-weight:400;letter-spacing:-0.363px;">Edit</div>
<svg style="position:absolute;left:2600px;top:882.6px;" width="27" height="18" viewBox="0 0 27 18"><path d="M3.5 4 L13.5 14 L23.5 4" fill="none" stroke="#d2d2d2" stroke-width="3"/></svg>
<div class="t" style="left:2180.01px;top:968.20px;font-size:25.989607259184385px;line-height:25.989607259184385px;color:#6b6b6b;font-weight:700;letter-spacing:-0.127px;">Contacts</div>
<div class="t" style="left:2310.84px;top:973.75px;font-size:19.43837674119577px;line-height:19.43837674119577px;color:#1a6dc6;font-weight:400;letter-spacing:-0.430px;">Edit</div>
<svg style="position:absolute;left:2600px;top:973.2px;" width="27" height="18" viewBox="0 0 27 18"><path d="M3.5 4 L13.5 14 L23.5 4" fill="none" stroke="#d2d2d2" stroke-width="3"/></svg>
<div class="t" style="left:2180.01px;top:1060.93px;font-size:25.83068846753233px;line-height:25.83068846753233px;color:#6b6b6b;font-weight:700;letter-spacing:-0.215px;">Upcoming appointments</div>
<svg style="position:absolute;left:2600px;top:1065.8px;" width="27" height="18" viewBox="0 0 27 18"><path d="M3.5 4 L13.5 14 L23.5 4" fill="none" stroke="#d2d2d2" stroke-width="3"/></svg>
<div class="t" style="left:2180.02px;top:1149.67px;font-size:25.787237898198008px;line-height:25.787237898198008px;color:#6b6b6b;font-weight:700;letter-spacing:-0.228px;">Communication settings</div>
<svg style="position:absolute;left:2600px;top:1154.5px;" width="27" height="18" viewBox="0 0 27 18"><path d="M3.5 4 L13.5 14 L23.5 4" fill="none" stroke="#d2d2d2" stroke-width="3"/></svg>
<div class="t" style="left:2180.02px;top:1239.36px;font-size:25.560853636870714px;line-height:25.560853636870714px;color:#6b6b6b;font-weight:700;letter-spacing:-0.360px;">Invoices</div>
<svg style="position:absolute;left:2600px;top:1244px;" width="27" height="18" viewBox="0 0 27 18"><path d="M3.5 4 L13.5 14 L23.5 4" fill="none" stroke="#d2d2d2" stroke-width="3"/></svg>
<div class="t" style="left:2180.02px;top:1328.92px;font-size:25.612853754397015px;line-height:25.612853754397015px;color:#6b6b6b;font-weight:700;letter-spacing:-0.316px;">Billing documents</div>
<svg style="position:absolute;left:2600px;top:1333.6px;" width="27" height="18" viewBox="0 0 27 18"><path d="M3.5 4 L13.5 14 L23.5 4" fill="none" stroke="#d2d2d2" stroke-width="3"/></svg>
<svg style="position:absolute;left:2401px;top:1330px;" width="27" height="25" viewBox="0 0 27 25"><circle cx="13" cy="12.5" r="10" fill="none" stroke="#6b6b6b" stroke-width="1.8"/><text x="13" y="18" text-anchor="middle" font-family="Liberation Sans" font-size="15" font-weight="400" fill="#6b6b6b">?</text></svg>
<div style="position:absolute;left:2759px;top:1297px;width:73px;height:73px;background:#444;border-radius:50%;"></div>
<div class="t" style="left:2778.50px;top:1307.94px;font-size:53px;line-height:53px;color:#fff;font-weight:700;">?</div>
</body></html>
